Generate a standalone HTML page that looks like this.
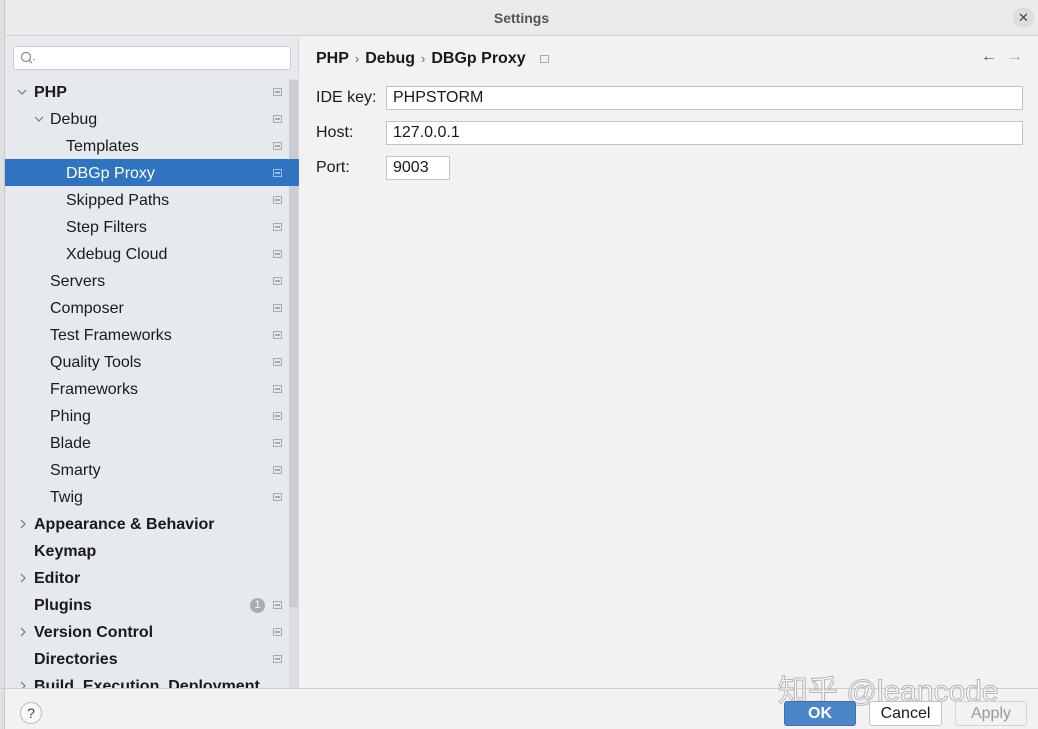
<!DOCTYPE html>
<html><head><meta charset="utf-8"><style>
*{margin:0;padding:0;box-sizing:border-box}
body{width:1038px;height:729px;overflow:hidden;background:#f2f2f2;font-family:"Liberation Sans","Noto Sans CJK SC",sans-serif;color:#1a1a1a;position:relative}
.lstrip{position:absolute;left:0;top:0;width:5px;height:729px;background:#e0e0e0;border-right:1px solid #c9c9c9}
.title{position:absolute;left:5px;top:0;right:0;height:36px;background:#ebebeb;border-bottom:1px solid #cfcfcf;text-align:center;font-weight:bold;font-size:14px;line-height:36px;color:#555}
.close{position:absolute;right:4px;top:7px;width:21px;height:21px;border-radius:50%;background:#dedede;text-align:center;line-height:21px;font-size:13px;color:#444;font-weight:normal}
.side{position:absolute;left:5px;top:37px;width:294px;height:651px;background:#e6eaef;border-right:1px solid #d5d9de}
.search{position:absolute;left:8px;top:9px;width:278px;height:24px;background:#fff;border:1px solid #c8ccd0;border-radius:3px}
.track{position:absolute;left:284px;top:42px;width:9px;height:609px;background:#dadde2}
.thumb{position:absolute;left:284px;top:43px;width:9px;height:527px;background:#c9ccd0}
.row{position:absolute;left:0;width:284px;height:27px;font-size:16px;line-height:29px;white-space:nowrap}
.row.b{font-weight:bold}
.row.sel{background:#2f74c0;color:#fff;width:294px}
.arr{position:absolute;top:9px}
.ic{position:absolute;left:268px;top:10px;width:9px;height:8px;border:1px solid #aaa;}
.ic:after{content:"";position:absolute;left:1px;top:2px;width:5px;height:2px;background:#aaa}
.sel .ic{border-color:#9cbde3}.sel .ic:after{background:#9cbde3}
.bc{position:absolute;left:316px;top:50px;font-size:16px;font-weight:bold;white-space:nowrap}
.bc span{font-weight:normal;color:#666;font-size:13px;margin:0 6px}
.lab{position:absolute;left:316px;font-size:16px}
.inp{position:absolute;left:386px;height:24px;background:#fff;border:1px solid #c4c4c4;font-size:16px;line-height:22px;padding-left:6px}
.foot{position:absolute;left:0;top:688px;width:1038px;height:1px;background:#cfcfcf}
.btn{position:absolute;top:701px;height:25px;border-radius:3px;font-size:16px;text-align:center;line-height:24px}
</style></head><body>
<div class="lstrip"></div>
<div class="title">Settings<div class="close">✕</div></div>
<div class="side">
<div class="search"><svg width="20" height="20" style="position:absolute;left:4px;top:2px"><circle cx="8" cy="8" r="4.5" fill="none" stroke="#888" stroke-width="1.2"/><line x1="11" y1="11" x2="14" y2="14" stroke="#888" stroke-width="1.2"/><path d="M15 10l2 0l-1 1.5z" fill="#888"/></svg></div>
<div class="track"></div><div class="thumb"></div>
</div>
<div style="position:absolute;left:5px;top:0">
<div class="row b" style="top:78px"><svg class="arr" style="left:12px" width="10" height="10"><path d="M1 3l4 4 4-4" fill="none" stroke="#777" stroke-width="1.2"/></svg><span style="position:absolute;left:29px">PHP</span><i class="ic"></i></div>
<div class="row" style="top:105px"><svg class="arr" style="left:29px" width="10" height="10"><path d="M1 3l4 4 4-4" fill="none" stroke="#777" stroke-width="1.2"/></svg><span style="position:absolute;left:45px">Debug</span><i class="ic"></i></div>
<div class="row" style="top:132px"><span style="position:absolute;left:61px">Templates</span><i class="ic"></i></div>
<div class="row sel" style="top:159px"><span style="position:absolute;left:61px">DBGp Proxy</span><i class="ic"></i></div>
<div class="row" style="top:186px"><span style="position:absolute;left:61px">Skipped Paths</span><i class="ic"></i></div>
<div class="row" style="top:213px"><span style="position:absolute;left:61px">Step Filters</span><i class="ic"></i></div>
<div class="row" style="top:240px"><span style="position:absolute;left:61px">Xdebug Cloud</span><i class="ic"></i></div>
<div class="row" style="top:267px"><span style="position:absolute;left:45px">Servers</span><i class="ic"></i></div>
<div class="row" style="top:294px"><span style="position:absolute;left:45px">Composer</span><i class="ic"></i></div>
<div class="row" style="top:321px"><span style="position:absolute;left:45px">Test Frameworks</span><i class="ic"></i></div>
<div class="row" style="top:348px"><span style="position:absolute;left:45px">Quality Tools</span><i class="ic"></i></div>
<div class="row" style="top:375px"><span style="position:absolute;left:45px">Frameworks</span><i class="ic"></i></div>
<div class="row" style="top:402px"><span style="position:absolute;left:45px">Phing</span><i class="ic"></i></div>
<div class="row" style="top:429px"><span style="position:absolute;left:45px">Blade</span><i class="ic"></i></div>
<div class="row" style="top:456px"><span style="position:absolute;left:45px">Smarty</span><i class="ic"></i></div>
<div class="row" style="top:483px"><span style="position:absolute;left:45px">Twig</span><i class="ic"></i></div>
<div class="row b" style="top:510px"><svg class="arr" style="left:13px" width="10" height="10"><path d="M3 1l4 4-4 4" fill="none" stroke="#777" stroke-width="1.2"/></svg><span style="position:absolute;left:29px">Appearance &amp; Behavior</span></div>
<div class="row b" style="top:537px"><span style="position:absolute;left:29px">Keymap</span></div>
<div class="row b" style="top:564px"><svg class="arr" style="left:13px" width="10" height="10"><path d="M3 1l4 4-4 4" fill="none" stroke="#777" stroke-width="1.2"/></svg><span style="position:absolute;left:29px">Editor</span></div>
<div class="row b" style="top:591px"><span style="position:absolute;left:29px">Plugins</span><span style="position:absolute;left:245px;top:7px;width:15px;height:15px;border-radius:50%;background:#a9adb1;color:#fff;font-size:11px;line-height:15px;text-align:center;font-weight:normal">1</span><i class="ic"></i></div>
<div class="row b" style="top:618px"><svg class="arr" style="left:13px" width="10" height="10"><path d="M3 1l4 4-4 4" fill="none" stroke="#777" stroke-width="1.2"/></svg><span style="position:absolute;left:29px">Version Control</span><i class="ic"></i></div>
<div class="row b" style="top:645px"><span style="position:absolute;left:29px">Directories</span><i class="ic"></i></div>
<div style="position:absolute;left:0;top:672px;width:284px;height:16px;overflow:hidden"><div class="row b" style="top:0"><svg class="arr" style="left:13px" width="10" height="10"><path d="M3 1l4 4-4 4" fill="none" stroke="#777" stroke-width="1.2"/></svg><span style="position:absolute;left:29px">Build, Execution, Deployment</span></div></div>
</div>
<div class="bc">PHP<span>›</span>Debug<span>›</span>DBGp Proxy <i style="display:inline-block;width:9px;height:8px;border:1px solid #aaa;margin-left:10px;vertical-align:middle"></i></div>
<div style="position:absolute;left:981px;top:48px;font-size:16px;color:#555">←</div>
<div style="position:absolute;left:1007px;top:48px;font-size:16px;color:#aaa">→</div>
<div class="lab" style="top:89px">IDE key:</div><div class="inp" style="top:86px;width:637px">PHPSTORM</div>
<div class="lab" style="top:124px">Host:</div><div class="inp" style="top:121px;width:637px">127.0.0.1</div>
<div class="lab" style="top:159px">Port:</div><div class="inp" style="top:156px;width:64px">9003</div>
<div class="foot"></div>
<div style="position:absolute;left:778px;top:666px;font-size:30px;color:rgba(255,255,255,.85);-webkit-text-stroke:1px #b5b5b5;white-space:nowrap">知乎 @leancode</div>
<div style="position:absolute;left:20px;top:702px;width:22px;height:22px;border-radius:50%;border:1px solid #bbb;background:#fafafa;text-align:center;line-height:20px;font-size:14px;color:#444">?</div>
<div class="btn" style="left:784px;width:72px;background:#4a86c8;border:1px solid #3a72b0;color:#fff;font-weight:bold">OK</div>
<div class="btn" style="left:869px;width:73px;background:#fff;border:1px solid #c4c4c4">Cancel</div>
<div class="btn" style="left:955px;width:72px;background:#f2f2f2;border:1px solid #d4d4d4;color:#999">Apply</div>
</body></html>
